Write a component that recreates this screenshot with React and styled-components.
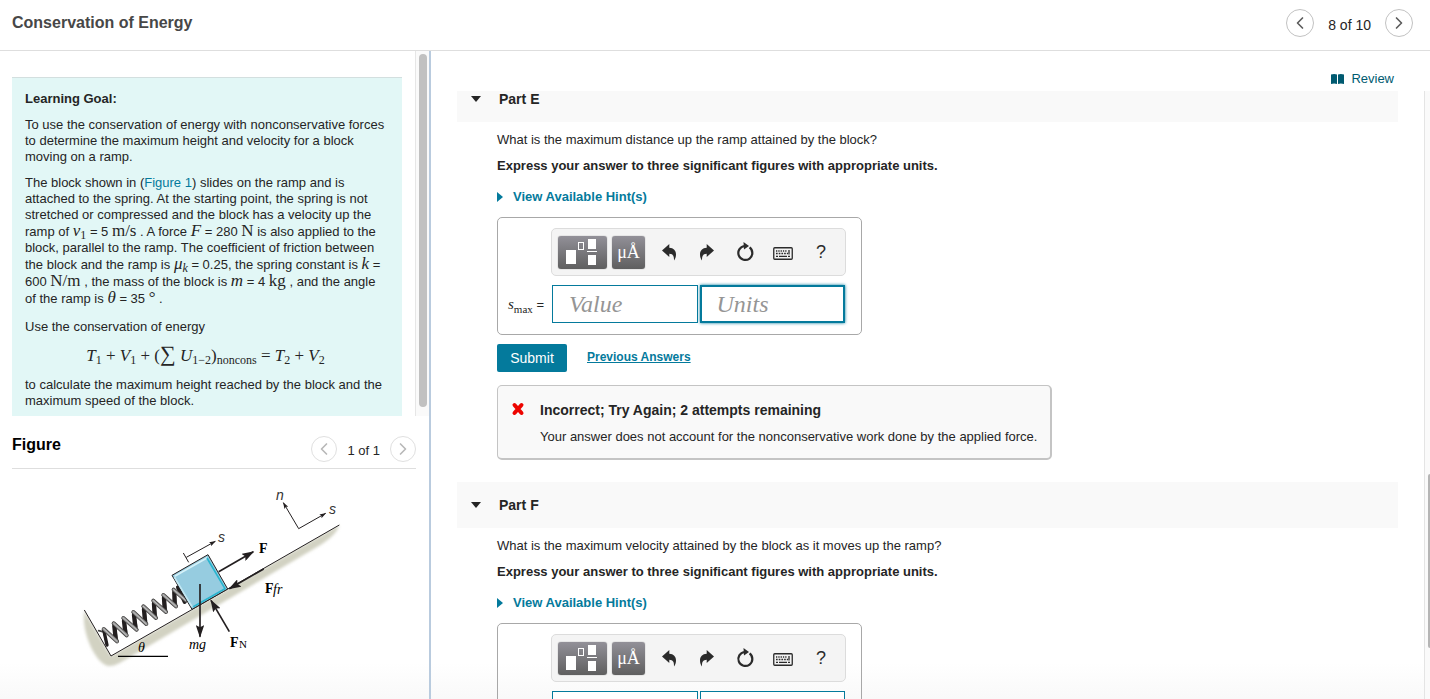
import React from 'react';
import styled, { createGlobalStyle } from 'styled-components';
import { ChevronLeft, ChevronRight } from 'lucide-react';

const colors = {
  text: '#252525',
  title: '#474747',
  teal: '#047a9c',
  darkTeal: '#005a70',
  mint: '#e2f7f6',
  panel: '#f9f9f9',
  line: '#dedede',
};

const sans = "'Liberation Sans', Arial, sans-serif";
const serif = "'Liberation Serif', 'Times New Roman', serif";

export default function App() {
  return (
    <Page>
      <GlobalStyle />
      <Header>
        <Title>Conservation of Energy</Title>
        <Pager current={8} total={10} label="item" />
      </Header>

      <Columns>
        <Sidebar>
          <GoalScroller>
            <LearningGoal />
            <GoalTrack>
              <GoalThumb />
            </GoalTrack>
          </GoalScroller>
          <FigurePanel>
            <FigureHeader>
              <h2>Figure</h2>
              <Pager current={1} total={1} label="figure" muted />
            </FigureHeader>
            <RampDiagram />
          </FigurePanel>
        </Sidebar>

        <Content>
          <ReviewBar>
            <ReviewLink href="#review">
              <BookIcon />
              Review
            </ReviewLink>
          </ReviewBar>
          <Scroller>
            <Parts>
              <Part
                name="E"
                question="What is the maximum distance up the ramp attained by the block?"
                symbol="s"
                unitsActive
              >
                <Actions>
                  <Submit type="button">Submit</Submit>
                  <Previous href="#previous">Previous Answers</Previous>
                </Actions>
                <Feedback role="status">
                  <CrossIcon />
                  <div>
                    <h3>Incorrect; Try Again; 2 attempts remaining</h3>
                    <p>
                      Your answer does not account for the nonconservative work
                      done by the applied force.
                    </p>
                  </div>
                </Feedback>
              </Part>
              <Part
                name="F"
                question="What is the maximum velocity attained by the block as it moves up the ramp?"
                symbol="v"
              />
            </Parts>
            <Track>
              <Thumb />
            </Track>
          </Scroller>
        </Content>
      </Columns>
    </Page>
  );
}

function Pager({ current, total, label, muted }) {
  return (
    <PagerRow $muted={muted}>
      <RoundButton type="button" aria-label={`Previous ${label}`} $muted={muted}>
        <ChevronLeft size={20} strokeWidth={2} />
      </RoundButton>
      <span>
        {current} of {total}
      </span>
      <RoundButton type="button" aria-label={`Next ${label}`} $muted={muted}>
        <ChevronRight size={20} strokeWidth={2} />
      </RoundButton>
    </PagerRow>
  );
}

function LearningGoal() {
  return (
    <Goal>
      <p>
        <strong>Learning Goal:</strong>
      </p>
      <p>
        To use the conservation of energy with nonconservative forces to
        determine the maximum height and velocity for a block moving on a ramp.
      </p>
      <p>
        The block shown in (<a href="#figure">Figure 1</a>) slides on the ramp
        and is attached to the spring. At the starting point, the spring is not
        stretched or compressed and the block has a velocity up the ramp of{' '}
        <Math>
          <i>v</i>
          <sub>1</sub>
        </Math>{' '}
        = 5 <Math>m/s</Math> . A force{' '}
        <Math>
          <i>F</i>
        </Math>{' '}
        = 280 <Math>N</Math> is also applied to the block, parallel to the ramp.
        The coefficient of friction between the block and the ramp is{' '}
        <Math>
          <i>μ</i>
          <sub>
            <i>k</i>
          </sub>
        </Math>{' '}
        = 0.25, the spring constant is{' '}
        <Math>
          <i>k</i>
        </Math>{' '}
        =<br />
        600 <Math>N/m</Math> , the mass of the block is{' '}
        <Math>
          <i>m</i>
        </Math>{' '}
        = 4 <Math>kg</Math> , and the angle
        <br />
        of the ramp is{' '}
        <Math>
          <i>θ</i>
        </Math>{' '}
        = 35 <Math>°</Math> .
      </p>
      <GoalLead>Use the conservation of energy</GoalLead>
      <Equation>
        <i>T</i>
        <sub>1</sub> + <i>V</i>
        <sub>1</sub> + (<Sum>∑</Sum> <i>U</i>
        <sub>1−2</sub>)<sub>noncons</sub> = <i>T</i>
        <sub>2</sub> + <i>V</i>
        <sub>2</sub>
      </Equation>
      <p>
        to calculate the maximum height reached by the block and the maximum
        speed of the block.
      </p>
    </Goal>
  );
}

function Part({ name, question, symbol, unitsActive, children }) {
  const id = `value-${name}`;
  return (
    <section>
      <PartHeader>
        <Caret viewBox="0 0 10 6">
          <path d="M0 0h10L5 6z" fill="currentColor" />
        </Caret>
        <h2>Part {name}</h2>
      </PartHeader>
      <PartBody>
        <p>{question}</p>
        <p>
          <strong>
            Express your answer to three significant figures with appropriate
            units.
          </strong>
        </p>
        <Hint type="button">
          <svg width="6" height="10" viewBox="0 0 6 10">
            <path d="M0 0l6 5-6 5z" fill="currentColor" />
          </svg>
          View Available Hint(s)
        </Hint>
        <AnswerBox>
          <Toolbar />
          <VariableLabel htmlFor={id}>
            <i>{symbol}</i>
            <sub>max</sub> <b>=</b>
          </VariableLabel>
          <Fields>
            <Field id={id} placeholder="Value" />
            <Field
              placeholder="Units"
              aria-label={`Units for part ${name}`}
              $active={unitsActive}
            />
          </Fields>
        </AnswerBox>
        {children}
      </PartBody>
    </section>
  );
}

function Toolbar() {
  return (
    <Tools>
      <GreyButton type="button" aria-label="Templates" $wide>
        <svg width="34" height="28" viewBox="0 0 34 28" fill="#fff">
          <path d="M0 12h10v14H0zM22 1h8v10h-8zM22 17h8v10h-8zM21 13h10v1H21z" />
          <rect x="12.5" y="4.5" width="5" height="7" fill="none" stroke="#fff" />
        </svg>
      </GreyButton>
      <GreyButton type="button" aria-label="Symbols">
        μÅ
      </GreyButton>
      <IconButton type="button" aria-label="Undo">
        <svg width="14" height="17" viewBox="0 0 14 17">
          <path d={CURVED_ARROW} fill="currentColor" />
        </svg>
      </IconButton>
      <IconButton type="button" aria-label="Redo">
        <svg width="14" height="17" viewBox="0 0 14 17">
          <path
            d={CURVED_ARROW}
            fill="currentColor"
            transform="matrix(-1 0 0 1 14 0)"
          />
        </svg>
      </IconButton>
      <IconButton type="button" aria-label="Reset">
        <svg width="18" height="20" viewBox="0 0 18 20">
          <path
            d="M13.6 5.4A7 7 0 1 1 8.5 4"
            fill="none"
            stroke="currentColor"
            strokeWidth="2.2"
          />
          <path d="M7.5 0l5.5 4-5 3.5z" fill="currentColor" />
        </svg>
      </IconButton>
      <IconButton type="button" aria-label="Keyboard">
        <svg width="20" height="16" viewBox="0 0 20 16">
          <rect
            x="0.75"
            y="3.75"
            width="18.5"
            height="11.5"
            rx="1"
            fill="none"
            stroke="currentColor"
            strokeWidth="1.3"
          />
          <g stroke="currentColor" strokeWidth="1.3">
            <path d="M3 7h11" strokeDasharray="1.3 1" />
            <path d="M3 9.5h12" strokeDasharray="1.7 1" />
            <path d="M3 12.3h2M6 12.3h8M15 12.3h2M16 6v4.5" />
          </g>
        </svg>
      </IconButton>
      <IconButton type="button" aria-label="Help">
        ?
      </IconButton>
    </Tools>
  );
}

const CURVED_ARROW =
  'M0 6.5L7.3 0v3.7C11.6 3.9 14 6.5 14 10.5c0 2.4-.7 4.500-2 6 .2-4.600-1-6.600-4.700-6.700V13z';

function BookIcon() {
  return (
    <svg width="13" height="10" viewBox="0 0 13 10" fill="currentColor">
      <path d="M0 .6C2-.1 4.4-.1 6 .6V10C4.4 9.3 2 9.3 0 10zM7 .6c1.6-.7 4-.7 6 0V10c-2-.7-4.4-.7-6 0z" />
    </svg>
  );
}

function CrossIcon() {
  return (
    <svg width="14" height="14" viewBox="0 0 14 14">
      <path
        d="M3.5 3l7 8M10.5 3l-7 8"
        stroke="#ed0500"
        strokeWidth="4"
        strokeLinecap="round"
      />
    </svg>
  );
}

// each coil runs from a top point down to a bottom point
const COILS = [
  [101, 447, 141, 484],
  [131, 430, 170, 466],
  [160, 414, 200, 449],
  [190, 396, 229, 432],
  [220, 379, 258, 414],
  [250, 362, 288, 396],
  [280, 345, 318, 379],
  [311, 329, 347, 361],
];

function Spring() {
  const front = COILS.map(([a, b, c, d]) => `M${a} ${b}L${c} ${d}`).join('');
  return (
    <g strokeLinecap="round">
      <path d="M86 452l15 4 10 40" stroke="#444" strokeWidth="5" />
      <path d="M101 449L111 495" strokeWidth="10" />
      <path d="M324 322L344 366" strokeWidth="12" />
      {COILS.slice(1).map(([x, y], i) => (
        <g key={x}>
          <path
            d={`M${x} ${y}L${COILS[i][2]} ${COILS[i][3]}`}
            stroke="#777"
            strokeWidth="9"
          />
          <path
            d={`M${x + 2} ${y + 8}L${COILS[i][2] - 4} ${COILS[i][3] - 8}`}
            strokeWidth="13"
          />
        </g>
      ))}
      <path d={front} stroke="#3c3a39" strokeWidth="12" />
      <path d={front} stroke="#929292" strokeWidth="8" />
      <path d={front} stroke="#c6c6c6" strokeWidth="3" />
    </g>
  );
}

function RampDiagram() {
  return (
    <Diagram viewBox="0 0 290 200" role="img" aria-label="Block on a ramp">
      <defs>
        <filter id="soft">
          <feGaussianBlur stdDeviation="5" />
        </filter>
        <marker
          id="head"
          viewBox="0 0 12 8"
          refX="11"
          refY="4"
          markerWidth="38"
          markerHeight="25"
          markerUnits="userSpaceOnUse"
          orient="auto"
        >
          <path d="M0 0l12 4-12 4 2-4z" fill="#231f20" />
        </marker>
        <marker
          id="smallHead"
          viewBox="0 0 12 8"
          refX="11"
          refY="4"
          markerWidth="20"
          markerHeight="13"
          markerUnits="userSpaceOnUse"
          orient="auto"
        >
          <path d="M0 0l12 4-12 4 2-4z" fill="#231f20" />
        </marker>
      </defs>
      <g transform="scale(0.33333)" fill="none" stroke="#231f20">
        <path
          d="M43 392L123 528 808 135C802 158 775 182 740 202L165 540C140 554 118 568 96 548C62 520 34 440 43 392z"
          fill="#d2d2c2"
          stroke="none"
          filter="url(#soft)"
        />
        <path
          d="M43 390L123 528 808 135 780 60 300 220 60 370z"
          fill="#fff"
          stroke="none"
        />
        <path d="M43 390L123 528 808 135" strokeWidth="3" />
        <path d="M144 529H294" stroke="#000" strokeWidth="4" />

        <Spring />

        <path d="M306 286L414 224 473 327 366 388z" fill="#96cce0" strokeWidth="3" />
        <path d="M314 289L412 233" stroke="#d5f1f8" strokeWidth="5" />
        <path d="M313 291L366 380" stroke="#c2e7f2" strokeWidth="5" />
        <path d="M411 234L465 326 370 380" stroke="#29b5cf" strokeWidth="5" />

        <path d="M390 312V470" strokeWidth="5" markerEnd="url(#head)" />
        <path d="M446 275L550 215" strokeWidth="5" markerEnd="url(#head)" />
        <path d="M581 267L478 326" strokeWidth="5" markerEnd="url(#head)" />
        <path d="M478 455L423 361" strokeWidth="5" markerEnd="url(#head)" />
        <path d="M340 219L356 247" strokeWidth="3" />
        <path d="M349 232L436 184" strokeWidth="3" markerEnd="url(#smallHead)" />
        <path d="M686 146L640 68" strokeWidth="3" markerEnd="url(#smallHead)" />
        <path d="M686 146L767 100" strokeWidth="3" markerEnd="url(#smallHead)" />
      </g>
      <DiagramText x="148" y="62" $sans>s</DiagramText>
      <DiagramText x="259" y="34" $sans>s</DiagramText>
      <DiagramText x="206" y="20" $sans>n</DiagramText>
      <DiagramText x="68" y="172">θ</DiagramText>
      <DiagramText x="119" y="169">mg</DiagramText>
      <DiagramText x="189" y="73" $bold>F</DiagramText>
      <DiagramText x="195" y="113" $bold>F</DiagramText>
      <DiagramText x="203" y="114">fr</DiagramText>
      <DiagramText x="160" y="167" $bold>F</DiagramText>
      <DiagramText x="169" y="168" $small>N</DiagramText>
    </Diagram>
  );
}

const GlobalStyle = createGlobalStyle`
  * {
    box-sizing: border-box;
  }

  body {
    margin: 0;
    font-family: ${sans};
    font-size: 13px;
    line-height: 16px;
    color: ${colors.text};
  }

  h1, h2, h3, p {
    margin: 0;
  }

  a {
    color: ${colors.teal};
    text-decoration: none;
  }

  button {
    padding: 0;
    border: 0;
    background: none;
    font-family: inherit;
    cursor: pointer;
  }

  svg {
    display: block;
    flex: none;
  }
`;

const Page = styled.div`
  display: flex;
  flex-direction: column;
  height: 100vh;
  overflow: hidden;
  background: linear-gradient(#fff calc(100% - 36px), #f9f9f9);
`;

const Header = styled.header`
  display: flex;
  flex: none;
  justify-content: space-between;
  height: 51px;
  padding: 9px 17px 0 12px;
  border-bottom: 1px solid ${colors.line};
`;

const Title = styled.h1`
  font-size: 16px;
  line-height: 28px;
  color: ${colors.title};
`;

const PagerRow = styled.div`
  display: flex;
  height: 28px;
  gap: ${(props) => (props.$muted ? 10 : 14)}px;
  font-size: ${(props) => (props.$muted ? 13 : 14)}px;
  line-height: ${(props) => (props.$muted ? 30 : 32)}px;
`;

const RoundButton = styled.button`
  display: flex;
  align-items: center;
  justify-content: center;
  width: ${(props) => (props.$muted ? 26 : 28)}px;
  height: ${(props) => (props.$muted ? 26 : 28)}px;
  border: 1px solid ${(props) => (props.$muted ? '#e0e0e0' : '#c2c2c2')};
  border-radius: 50%;
  background: #fff;
  color: ${(props) => (props.$muted ? '#b8b8b8' : '#5c5c5c')};
`;

const Columns = styled.main`
  display: flex;
  flex: 1;
  min-height: 0;
`;

const Sidebar = styled.aside`
  display: flex;
  flex: none;
  flex-direction: column;
  width: 431px;
  border-right: 2px solid #b9cbde;
`;

const GoalScroller = styled.div`
  display: flex;
  justify-content: space-between;
  padding-left: 12px;
`;

const Goal = styled.section`
  width: 390px;
  margin-top: 26px;
  padding: 13px 16px 7px 13px;
  border-top: 1px solid #d3dfdf;
  background: ${colors.mint};

  p + p {
    margin-top: 10px;
  }
`;

const GoalLead = styled.p`
  && {
    margin-top: 12px;
  }
`;

const Math = styled.span`
  font-family: ${serif};
  font-size: 17px;
  line-height: 15px;

  sub {
    font-size: 12px;
    line-height: 0;
    vertical-align: -3px;
  }
`;

const Equation = styled.div`
  margin: 10px 0;
  font-family: ${serif};
  font-size: 17px;
  line-height: 22px;
  text-align: center;
  white-space: nowrap;

  sub {
    font-size: 12px;
    line-height: 0;
    vertical-align: -3px;
  }
`;

const Sum = styled.span`
  font-size: 22px;
  line-height: 0;
`;

const GoalTrack = styled.div`
  width: 14px;
  padding: 3px 2px 9px 3px;
  border-left: 1px solid #e6e6e6;
  background: #fafafa;
`;

const GoalThumb = styled.div`
  height: 100%;
  border-radius: 4px;
  background: #c1c1c1;
`;

const FigurePanel = styled.section`
  flex: 1;
`;

const FigureHeader = styled.div`
  display: flex;
  justify-content: space-between;
  height: 53px;
  margin: 0 13px 0 12px;
  padding-top: 20px;
  border-bottom: 1px solid ${colors.line};

  h2 {
    font-size: 16px;
    line-height: 18px;
    color: #000;
  }
`;

const Diagram = styled.svg`
  width: 290px;
  height: 200px;
  margin: 11px 0 0 70px;
`;

const DiagramText = styled.text`
  fill: ${(props) => (props.$sans ? '#333' : '#000')};
  font-family: ${(props) => (props.$sans ? sans : serif)};
  font-size: ${(props) => (props.$small ? 11 : 14)}px;
  font-style: ${(props) => (props.$bold || props.$small ? 'normal' : 'italic')};
  font-weight: ${(props) => (props.$bold ? 700 : 400)};
`;

const Content = styled.div`
  display: flex;
  flex: 1;
  flex-direction: column;
  min-width: 0;
`;

const ReviewBar = styled.div`
  display: flex;
  flex: none;
  justify-content: flex-end;
  height: 40px;
  padding: 20px 36px 0 0;
`;

const ReviewLink = styled.a`
  display: flex;
  align-items: center;
  gap: 7px;
  height: 16px;
  color: ${colors.darkTeal};
`;

const Scroller = styled.div`
  display: flex;
  flex: 1;
  min-height: 0;
  overflow: hidden;
`;

/* scrolled a little past the top of the first part */
const Parts = styled.div`
  flex: 1;
  margin: -15px 26px 0;
`;

const Track = styled.div`
  flex: none;
  width: 6px;
  padding: 383px 0 51px 3px;
  border-left: 1px solid #e4e4e4;
  background: #fafafa;
`;

const Thumb = styled.div`
  height: 100%;
  border-radius: 4px 0 0 4px;
  background: #b5b5b5;
`;

const PartHeader = styled.header`
  display: flex;
  align-items: center;
  gap: 18px;
  height: 46px;
  padding-left: 14px;
  background: ${colors.panel};

  h2 {
    font-size: 14px;
    line-height: 16px;
  }
`;

const Caret = styled.svg`
  width: 10px;
  height: 6px;
`;

const PartBody = styled.div`
  padding: 10px 0 22px 40px;

  > p + p {
    margin-top: 10px;
  }
`;

const Hint = styled.button`
  display: flex;
  align-items: center;
  gap: 10px;
  margin-top: 15px;
  font-size: 13px;
  font-weight: 700;
  line-height: 16px;
  color: ${colors.teal};
`;

const AnswerBox = styled.div`
  display: grid;
  grid-template-columns: 43px 295px;
  row-gap: 9px;
  width: 365px;
  margin-top: 12px;
  padding: 10px 10px 11px;
  border: 1px solid #a8a8a8;
  border-radius: 5px;
`;

const Tools = styled.div`
  display: flex;
  grid-column: 2;
  align-items: center;
  height: 48px;
  padding-left: 6px;
  border: 1px solid #dcdcdc;
  border-radius: 5px;
  background: #f4f4f4;
`;

const GreyButton = styled.button`
  display: flex;
  flex: none;
  align-items: center;
  justify-content: center;
  width: ${(props) => (props.$wide ? 49 : 33)}px;
  height: 33px;
  margin-right: 5px;
  border-radius: 3px;
  background: linear-gradient(#929098, #5f5f5f);
  box-shadow: 0 0 1px #666;
  color: #fff;
  font-family: ${serif};
  font-size: 18px;
  line-height: 36px;
`;

const IconButton = styled.button`
  display: flex;
  flex: none;
  align-items: center;
  justify-content: center;
  width: 38px;
  height: 33px;
  color: #2b2b2b;
  font-size: 18px;
`;

const VariableLabel = styled.label`
  align-self: center;
  font-family: ${serif};
  font-size: 15px;
  white-space: nowrap;

  sub {
    font-size: 11px;
    line-height: 0;
    vertical-align: -4px;
  }

  b {
    font-family: ${sans};
    font-size: 13px;
    font-weight: 400;
  }
`;

const Fields = styled.div`
  display: grid;
  grid-template-columns: 1fr 1fr;
  gap: 2px;
  padding: 0 1px;
`;

const Field = styled.input`
  min-width: 0;
  height: 38px;
  padding: 0 16px;
  border: 1px solid ${colors.teal};
  border-radius: 0;
  outline: 0;
  background: #fff;
  box-shadow: ${(props) =>
    props.$active ? `inset 0 0 0 1px ${colors.teal}, 0 0 3px ${colors.teal}` : 'none'};
  font-family: ${serif};
  font-size: 24px;
  font-style: italic;

  &::placeholder {
    color: #959595;
    opacity: 1;
  }
`;

const Actions = styled.div`
  display: flex;
  gap: 20px;
  margin-top: 9px;
`;

const Submit = styled.button`
  width: 70px;
  height: 28px;
  border-radius: 2px;
  background: ${colors.teal};
  color: #fff;
  font-size: 14px;
`;

const Previous = styled.a`
  font-size: 12px;
  font-weight: 700;
  line-height: 26px;
  text-decoration: underline;
`;

const Feedback = styled.div`
  display: flex;
  gap: 15px;
  width: 555px;
  margin-top: 13px;
  padding: 16px 12px 13px 13px;
  border: 1px solid #c4c4c4;
  border-right-width: 2px;
  border-bottom-width: 2px;
  border-radius: 5px;
  background: ${colors.panel};

  h3 {
    font-size: 14px;
    line-height: 16px;
  }

  p {
    margin-top: 11px;
    white-space: nowrap;
  }
`;
